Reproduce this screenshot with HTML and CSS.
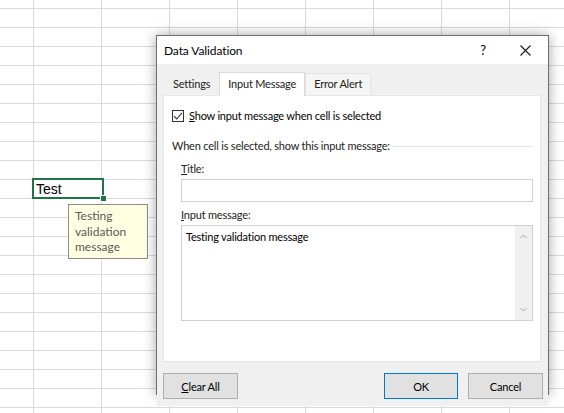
FILE: index.html
```html
<!DOCTYPE html>
<html lang="en">
<head>
    <meta charset="UTF-8">
    <title>Data Validation</title>
    <link rel="stylesheet" href="styles.css">
</head>
<body>
    <div class="sheet">
        <div class="cell-sel">Test<span class="fill-handle"></span></div>
        <div class="tip">Testing<br>validation<br>message</div>

        <div class="dialog">
            <div class="titlebar">
                <span class="title">Data Validation</span>
                <span class="help">?</span>
                <span class="close">
                    <svg width="11" height="11" viewBox="0 0 11 11"><path d="M0.5 0.5 L10.5 10.5 M10.5 0.5 L0.5 10.5" stroke="#1a1a1a" stroke-width="1.1" fill="none"/></svg>
                </span>
            </div>

            <div class="dlg-body">
                <div class="tabs">
                    <div class="tab">Settings</div>
                    <div class="tab active">Input Message</div>
                    <div class="tab lit">Error Alert</div>
                </div>

                <div class="panel">
                    <div class="check">
                        <span class="box">
                            <svg width="10" height="10" viewBox="0 0 10 10"><path d="M1 5.2 L3.8 8 L9 1.8" stroke="#333" stroke-width="1.1" fill="none"/></svg>
                        </span>
                        <span><u>S</u>how input message when cell is selected</span>
                    </div>

                    <div class="group">
                        <span>When cell is selected, show this input message:</span>
                        <span class="rule"></span>
                    </div>

                    <div class="fields">
                        <div class="lbl"><u>T</u>itle:</div>
                        <div class="input"></div>
                        <div class="lbl lbl-msg"><u>I</u>nput message:</div>
                        <div class="textarea">
                            <div class="ta-text">Testing validation message</div>
                            <div class="scroll">
                                <svg width="7" height="5" viewBox="0 0 7 5"><path d="M0.5 4 L3.5 1 L6.5 4" stroke="#a6a6a6" fill="none"/></svg>
                                <svg width="7" height="5" viewBox="0 0 7 5"><path d="M0.5 1 L3.5 4 L6.5 1" stroke="#a6a6a6" fill="none"/></svg>
                            </div>
                        </div>
                    </div>
                </div>

                <div class="buttons">
                    <button class="btn"><u>C</u>lear All</button>
                    <span class="spacer"></span>
                    <button class="btn ok">OK</button>
                    <button class="btn">Cancel</button>
                </div>
            </div>
        </div>
    </div>
</body>
</html>
```

FILE: styles.css
```css
body {
    margin: 0;
    font-family: Lato, "Noto Sans", sans-serif;
    color: #000;
}

/* spreadsheet background */
.sheet {
    position: relative;
    width: 564px;
    height: 413px;
    overflow: hidden;
    background-color: #fff;
    background-image:
        linear-gradient(to right, #dadada 1px, transparent 1px),
        linear-gradient(to bottom, #dadada 1px, transparent 1px);
    background-size: 68px 100%, 100% 19px;
    background-position: 33px 0, 0 8px;
}

.cell-sel {
    position: absolute;
    left: 32px;
    top: 178px;
    width: 66px;
    height: 17px;
    border: 2px solid #217346;
    background: #fff;
    font-family: "Liberation Sans", Arial, sans-serif;
    font-size: 14px;
    line-height: 18px;
    padding-left: 2px;
}

.fill-handle {
    position: absolute;
    right: -5px;
    bottom: -5px;
    width: 5px;
    height: 5px;
    background: #217346;
    border: 1px solid #fff;
}

.tip {
    position: absolute;
    left: 68px;
    top: 204px;
    width: 72px;
    height: 47px;
    padding: 3px 0 3px 6px;
    background: #ffffe1;
    border: 1px solid #8c8c8c;
    color: #595959;
    font-size: 12px;
    line-height: 15.5px;
}

/* dialog window */
.dialog {
    position: absolute;
    left: 156px;
    top: 35px;
    width: 391px;
    height: 358px;
    border: 1px solid #6e6e6e;
    box-shadow: 0 0 12px rgba(0, 0, 0, 0.35);
    display: flex;
    flex-direction: column;
    font-size: 11px;
    letter-spacing: -0.2px;
}

.titlebar {
    flex-shrink: 0;
    height: 28px;
    background: #fff;
    display: flex;
    align-items: center;
    padding-left: 7px;
    font-size: 12px;
    letter-spacing: -0.1px;
}

.title {
    flex: 1;
}

.help {
    width: 20px;
    margin-right: 27px;
    text-align: center;
    font-size: 13px;
}

.close {
    width: 11px;
    height: 11px;
    margin-right: 17px;
    display: flex;
}

.dlg-body {
    flex: 1;
    background: #f0f0f0;
    padding: 8px 7px 7px 6px;
    display: flex;
    flex-direction: column;
}

.tabs {
    display: flex;
    align-items: flex-end;
    height: 23px;
    padding-left: 1px;
}

.tab {
    height: 21px;
    line-height: 20px;
    padding: 0 8px;
    border: 1px solid transparent;
    border-bottom: none;
    color: #222;
}

.tab.lit {
    background: #f5f5f5;
    border-color: #e3e3e3;
}

.tab.active {
    height: 23px;
    line-height: 21px;
    background: #fff;
    border-color: #d9d9d9;
    margin-bottom: -1px;
    position: relative;
    z-index: 1;
}

.panel {
    height: 253px;
    flex-shrink: 0;
    background: #fff;
    border: 1px solid #e6e6e6;
    padding: 12px 7px 0 8px;
}

.check {
    display: flex;
    align-items: center;
    height: 16px;
    line-height: 16px;
}

.box {
    width: 10px;
    height: 10px;
    border: 1px solid #333;
    margin-right: 5px;
    display: flex;
}

.group {
    display: flex;
    align-items: center;
    margin-top: 14px;
    height: 16px;
    line-height: 16px;
    color: #222;
}

.rule {
    flex: 1;
    height: 1px;
    background: #e3e3e3;
    margin-left: 3px;
}

.fields {
    padding-left: 9px;
    margin-top: 7px;
}

.lbl {
    height: 16px;
    line-height: 16px;
    color: #222;
}

.lbl-msg {
    margin-top: 5px;
}

.input {
    margin-top: 2px;
    height: 21px;
    border: 1px solid #d0d0d0;
}

.textarea {
    margin-top: 2px;
    height: 94px;
    border: 1px solid #d0d0d0;
    display: flex;
}

.ta-text {
    flex: 1;
    padding: 3px 4px;
    line-height: 16px;
}

.scroll {
    width: 17px;
    background: #f0f0f0;
    display: flex;
    flex-direction: column;
    justify-content: space-between;
    align-items: center;
    padding: 8px 0 8px;
}

.buttons {
    display: flex;
    flex-shrink: 0;
    margin-top: 11px;
    margin-right: -2px;
    gap: 10px;
}

.spacer {
    flex: 1;
}

.btn {
    width: 75px;
    height: 26px;
    background: #e1e1e1;
    border: 1px solid #adadad;
    font-family: inherit;
    font-size: 11px;
    letter-spacing: -0.2px;
    color: #000;
    padding: 0;
}

.btn.ok {
    width: 74px;
    border-color: #0078d7;
}
```
